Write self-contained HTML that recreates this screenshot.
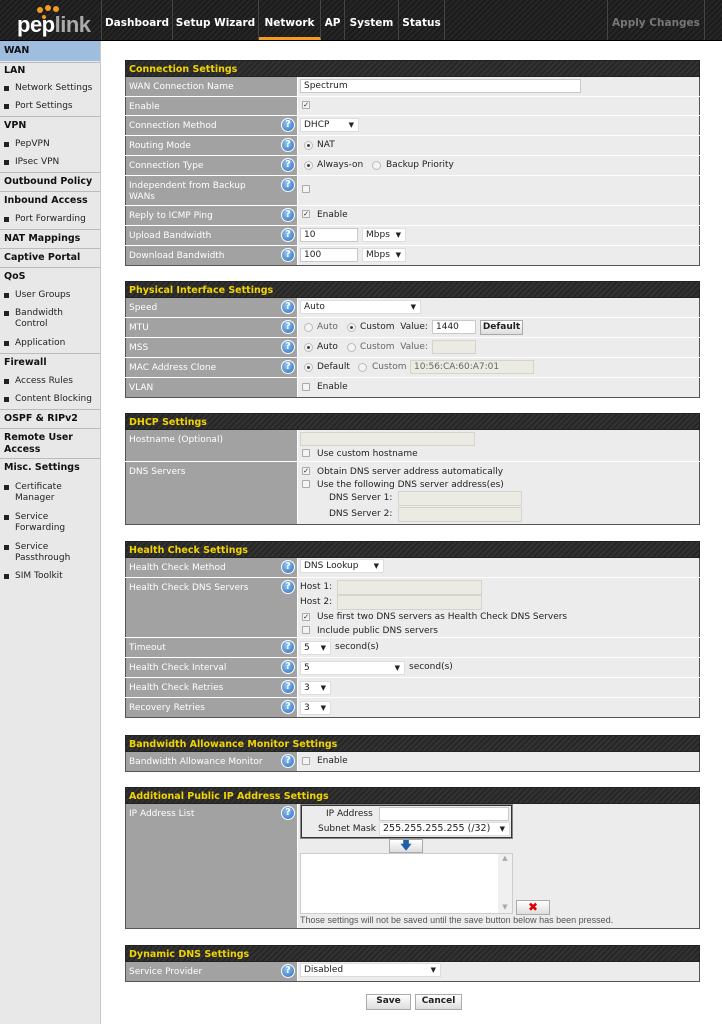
<!DOCTYPE html>
<html><head><meta charset="utf-8">
<style>
*{margin:0;padding:0;box-sizing:border-box}
body{width:722px;height:1024px;position:relative;background:#fff;font-family:"DejaVu Sans","Liberation Sans",sans-serif;font-size:9px;color:#222;overflow:hidden}
.a{position:absolute}
#top{left:0;top:0;width:722px;height:41px;background:repeating-linear-gradient(135deg,#262626 0 2px,#1b1b1b 2px 4px);border-bottom:1px solid #000}
.nav{position:absolute;top:0;height:40px;line-height:47px;color:#fff;font-weight:bold;font-size:10.5px;text-align:center;border-right:1px solid #444}
#side{left:0;top:41px;width:101px;height:983px;background:#e8e8e8;border-right:1px solid #c8c8c8}
.sh{position:absolute;left:0;width:100px;font-weight:bold;font-size:9.5px;color:#111;padding-left:4px;border-top:1px solid #bbb}
.si{position:absolute;left:4px;font-size:9px;color:#222;line-height:11px}
.si:before{content:"";position:absolute;left:0;top:3px;width:5px;height:5px;background:#222}
.si span{display:block;padding-left:11px}
.hd{position:absolute;left:125px;width:575px;height:17px;background:repeating-linear-gradient(135deg,#333 0 2px,#262626 2px 4px);color:#f2d400;font-weight:bold;font-size:9.5px;line-height:17px;padding-left:3px;border:1px solid #222}
.lb{position:absolute;left:125px;width:172px;background:#a2a2a2;color:#fff;font-size:9px;line-height:11px;padding:5px 3px 3px;border-left:1px solid #555}
.vl{position:absolute;left:298px;width:402px;background:#ececec;border-right:1px solid #555}
.bot{position:absolute;left:125px;width:575px;height:1px;background:#555}
.q{position:absolute;left:281px;width:14px;height:14px;border-radius:50%;background:radial-gradient(circle at 40% 35%,#8fc0ee,#2b71c2);border:1px solid #fff;color:#fff;font-weight:bold;font-size:10px;line-height:12px;text-align:center}
.t{position:absolute;line-height:11px;white-space:nowrap}
.in{position:absolute;height:14px;background:#fff;border:1px solid #c9c9c9;padding-left:3px;line-height:12px;font-size:9px}
.dis{background:#ebebe3;border-color:#d4d4cc}
.sel{position:absolute;height:14px;background:#fff;border:1px solid #ddd;padding-left:3px;line-height:12px;font-size:9px}
.sel:after{content:"▼";position:absolute;right:4px;top:0;font-size:7px}
.cb{position:absolute;width:8px;height:8px;border:1px solid #aaa;background:#f4f4f4;border-radius:1px;font-size:7px;line-height:6px;text-align:center;color:#222}
.rd{position:absolute;width:9px;height:9px;border:1px solid #bbb;border-radius:50%;background:#f4f4f4}
.rd.on:after{content:"";position:absolute;left:2px;top:2px;width:3px;height:3px;border-radius:50%;background:#444}
.btn{position:absolute;height:15px;background:linear-gradient(#fff,#ddd);border:1px solid #aaa;font-weight:bold;font-size:9px;line-height:13px;text-align:center}
</style></head><body>
<div id="top" class="a">
 <div class="a" style="left:17px;top:4px;width:70px;height:34px">
  <div class="a" style="left:20px;top:3px;width:6px;height:6px;border-radius:50%;background:#f39a1e"></div>
  <div class="a" style="left:28px;top:1px;width:6px;height:6px;border-radius:50%;background:#f39a1e"></div>
  <div class="a" style="left:36px;top:2px;width:6px;height:6px;border-radius:50%;background:#f39a1e"></div>
  <div class="a" style="left:25px;top:11px;width:4px;height:4px;border-radius:50%;background:#f39a1e"></div>
  <div class="t" style="left:0;top:10px;font-family:'Liberation Sans',sans-serif;font-size:22px;line-height:22px;font-weight:bold;color:#fff;letter-spacing:-0.5px">pep<span style="color:#aaa">link</span></div>
 </div>
 <div class="nav" style="left:101px;width:72px;border-left:1px solid #444">Dashboard</div>
 <div class="nav" style="left:173px;width:86px">Setup Wizard</div>
 <div class="nav" style="left:259px;width:62px;border-bottom:3px solid #f29b1d;line-height:47px">Network</div>
 <div class="nav" style="left:321px;width:24px">AP</div>
 <div class="nav" style="left:345px;width:54px">System</div>
 <div class="nav" style="left:399px;width:46px">Status</div>
 <div class="nav" style="left:607px;width:98px;color:#777;border-left:1px solid #444">Apply Changes</div>
</div>

<div id="side" class="a">
 <div class="sh" style="top:0;height:20px;line-height:19px;background:#9fbddf;border-top:none">WAN</div>
 <div class="sh" style="top:21px;line-height:16px">LAN</div>
 <div class="si" style="top:42px"><span>Network Settings</span></div>
 <div class="si" style="top:60px"><span>Port Settings</span></div>
 <div class="sh" style="top:75px;line-height:18px">VPN</div>
 <div class="si" style="top:98px"><span>PepVPN</span></div>
 <div class="si" style="top:116px"><span>IPsec VPN</span></div>
 <div class="sh" style="top:131px;line-height:18px">Outbound Policy</div>
 <div class="sh" style="top:150px;line-height:18px">Inbound Access</div>
 <div class="si" style="top:173px"><span>Port Forwarding</span></div>
 <div class="sh" style="top:188px;line-height:18px">NAT Mappings</div>
 <div class="sh" style="top:207px;line-height:18px">Captive Portal</div>
 <div class="sh" style="top:226px;line-height:18px">QoS</div>
 <div class="si" style="top:249px"><span>User Groups</span></div>
 <div class="si" style="top:267px"><span>Bandwidth<br>Control</span></div>
 <div class="si" style="top:297px"><span>Application</span></div>
 <div class="sh" style="top:312px;line-height:18px">Firewall</div>
 <div class="si" style="top:335px"><span>Access Rules</span></div>
 <div class="si" style="top:353px"><span>Content Blocking</span></div>
 <div class="sh" style="top:368px;line-height:18px">OSPF &amp; RIPv2</div>
 <div class="sh" style="top:387px;line-height:12px;padding-top:3px;height:29px">Remote User<br>Access</div>
 <div class="sh" style="top:417px;line-height:18px">Misc. Settings</div>
 <div class="si" style="top:441px"><span>Certificate<br>Manager</span></div>
 <div class="si" style="top:471px"><span>Service<br>Forwarding</span></div>
 <div class="si" style="top:501px"><span>Service<br>Passthrough</span></div>
 <div class="si" style="top:530px"><span>SIM Toolkit</span></div>
</div>

<!-- S1 -->
<div class="hd" style="top:60px">Connection Settings</div>
<div class="lb" style="top:77px;height:19px">WAN Connection Name</div><div class="vl" style="top:77px;height:19px"></div>
<div class="lb" style="top:97px;height:18px">Enable</div><div class="vl" style="top:97px;height:18px"></div>
<div class="lb" style="top:116px;height:19px">Connection Method</div><div class="vl" style="top:116px;height:19px"></div><div class="q" style="top:118px">?</div>
<div class="lb" style="top:136px;height:19px">Routing Mode</div><div class="vl" style="top:136px;height:19px"></div><div class="q" style="top:138px">?</div>
<div class="lb" style="top:156px;height:19px">Connection Type</div><div class="vl" style="top:156px;height:19px"></div><div class="q" style="top:158px">?</div>
<div class="lb" style="top:176px;height:29px">Independent from Backup<br>WANs</div><div class="vl" style="top:176px;height:29px"></div><div class="q" style="top:178px">?</div>
<div class="lb" style="top:206px;height:19px">Reply to ICMP Ping</div><div class="vl" style="top:206px;height:19px"></div><div class="q" style="top:208px">?</div>
<div class="lb" style="top:226px;height:19px">Upload Bandwidth</div><div class="vl" style="top:226px;height:19px"></div><div class="q" style="top:228px">?</div>
<div class="lb" style="top:246px;height:19px">Download Bandwidth</div><div class="vl" style="top:246px;height:19px"></div><div class="q" style="top:248px">?</div>
<div class="bot" style="top:265px"></div>
<div class="in" style="left:300px;top:79px;width:281px">Spectrum</div>
<div class="cb" style="left:302px;top:101px">✓</div>
<div class="sel" style="left:300px;top:118px;width:59px">DHCP</div>
<div class="rd on" style="left:304px;top:141px"></div><div class="t" style="left:317px;top:140px">NAT</div>
<div class="rd on" style="left:304px;top:161px"></div><div class="t" style="left:317px;top:160px">Always-on</div>
<div class="rd" style="left:372px;top:161px"></div><div class="t" style="left:386px;top:160px">Backup Priority</div>
<div class="cb" style="left:302px;top:185px"></div>
<div class="cb" style="left:302px;top:210px">✓</div><div class="t" style="left:317px;top:210px">Enable</div>
<div class="in" style="left:300px;top:228px;width:58px">10</div><div class="sel" style="left:362px;top:228px;width:44px">Mbps</div>
<div class="in" style="left:300px;top:248px;width:58px">100</div><div class="sel" style="left:362px;top:248px;width:44px">Mbps</div>

<!-- S2 -->
<div class="hd" style="top:281px">Physical Interface Settings</div>
<div class="lb" style="top:298px;height:19px">Speed</div><div class="vl" style="top:298px;height:19px"></div><div class="q" style="top:300px">?</div>
<div class="lb" style="top:318px;height:19px">MTU</div><div class="vl" style="top:318px;height:19px"></div><div class="q" style="top:320px">?</div>
<div class="lb" style="top:338px;height:19px">MSS</div><div class="vl" style="top:338px;height:19px"></div><div class="q" style="top:340px">?</div>
<div class="lb" style="top:358px;height:19px">MAC Address Clone</div><div class="vl" style="top:358px;height:19px"></div><div class="q" style="top:360px">?</div>
<div class="lb" style="top:378px;height:19px">VLAN</div><div class="vl" style="top:378px;height:19px"></div>
<div class="bot" style="top:397px"></div>
<div class="sel" style="left:300px;top:300px;width:121px">Auto</div>
<div class="rd" style="left:304px;top:323px"></div><div class="t" style="left:317px;top:322px;color:#666">Auto</div>
<div class="rd on" style="left:347px;top:323px"></div><div class="t" style="left:360px;top:322px">Custom&nbsp; Value:</div>
<div class="in" style="left:432px;top:320px;width:44px">1440</div>
<div class="btn" style="left:480px;top:320px;width:43px">Default</div>
<div class="rd on" style="left:304px;top:343px"></div><div class="t" style="left:317px;top:342px">Auto</div>
<div class="rd" style="left:347px;top:343px"></div><div class="t" style="left:360px;top:342px;color:#666">Custom&nbsp; Value:</div>
<div class="in dis" style="left:432px;top:340px;width:44px"></div>
<div class="rd on" style="left:304px;top:363px"></div><div class="t" style="left:317px;top:362px">Default</div>
<div class="rd" style="left:358px;top:363px"></div><div class="t" style="left:372px;top:362px;color:#666">Custom</div>
<div class="in dis" style="left:410px;top:360px;width:124px;color:#666">10:56:CA:60:A7:01</div>
<div class="cb" style="left:302px;top:383px"></div><div class="t" style="left:317px;top:382px">Enable</div>

<!-- S3 -->
<div class="hd" style="top:413px">DHCP Settings</div>
<div class="lb" style="top:430px;height:31px">Hostname (Optional)</div><div class="vl" style="top:430px;height:31px"></div>
<div class="lb" style="top:462px;height:62px">DNS Servers</div><div class="vl" style="top:462px;height:62px"></div>
<div class="bot" style="top:524px"></div>
<div class="in dis" style="left:300px;top:432px;width:175px"></div>
<div class="cb" style="left:302px;top:449px"></div><div class="t" style="left:317px;top:449px">Use custom hostname</div>
<div class="cb" style="left:302px;top:467px">✓</div><div class="t" style="left:317px;top:467px">Obtain DNS server address automatically</div>
<div class="cb" style="left:302px;top:480px"></div><div class="t" style="left:317px;top:480px">Use the following DNS server address(es)</div>
<div class="t" style="left:329px;top:493px">DNS Server 1:</div><div class="in dis" style="left:398px;top:491px;width:124px;height:15px"></div>
<div class="t" style="left:329px;top:509px">DNS Server 2:</div><div class="in dis" style="left:398px;top:507px;width:124px;height:15px"></div>

<!-- S4 -->
<div class="hd" style="top:541px">Health Check Settings</div>
<div class="lb" style="top:558px;height:19px">Health Check Method</div><div class="vl" style="top:558px;height:19px"></div><div class="q" style="top:560px">?</div>
<div class="lb" style="top:578px;height:59px">Health Check DNS Servers</div><div class="vl" style="top:578px;height:59px"></div><div class="q" style="top:580px">?</div>
<div class="lb" style="top:638px;height:19px">Timeout</div><div class="vl" style="top:638px;height:19px"></div><div class="q" style="top:640px">?</div>
<div class="lb" style="top:658px;height:19px">Health Check Interval</div><div class="vl" style="top:658px;height:19px"></div><div class="q" style="top:660px">?</div>
<div class="lb" style="top:678px;height:19px">Health Check Retries</div><div class="vl" style="top:678px;height:19px"></div><div class="q" style="top:680px">?</div>
<div class="lb" style="top:698px;height:19px">Recovery Retries</div><div class="vl" style="top:698px;height:19px"></div><div class="q" style="top:700px">?</div>
<div class="bot" style="top:717px"></div>
<div class="sel" style="left:300px;top:559px;width:84px">DNS Lookup</div>
<div class="t" style="left:300px;top:582px">Host 1:</div><div class="in dis" style="left:337px;top:580px;width:145px;height:15px"></div>
<div class="t" style="left:300px;top:597px">Host 2:</div><div class="in dis" style="left:337px;top:595px;width:145px;height:15px"></div>
<div class="cb" style="left:302px;top:613px">✓</div><div class="t" style="left:317px;top:612px">Use first two DNS servers as Health Check DNS Servers</div>
<div class="cb" style="left:302px;top:626px"></div><div class="t" style="left:317px;top:626px">Include public DNS servers</div>
<div class="sel" style="left:300px;top:641px;width:31px">5</div><div class="t" style="left:335px;top:642px">second(s)</div>
<div class="sel" style="left:300px;top:661px;width:105px">5</div><div class="t" style="left:409px;top:662px">second(s)</div>
<div class="sel" style="left:300px;top:681px;width:31px">3</div>
<div class="sel" style="left:300px;top:701px;width:31px">3</div>

<!-- S5 -->
<div class="hd" style="top:735px">Bandwidth Allowance Monitor Settings</div>
<div class="lb" style="top:752px;height:19px">Bandwidth Allowance Monitor</div><div class="vl" style="top:752px;height:19px"></div><div class="q" style="top:754px">?</div>
<div class="bot" style="top:771px"></div>
<div class="cb" style="left:302px;top:757px"></div><div class="t" style="left:317px;top:756px">Enable</div>

<!-- S6 -->
<div class="hd" style="top:787px">Additional Public IP Address Settings</div>
<div class="lb" style="top:804px;height:124px">IP Address List</div><div class="vl" style="top:804px;height:124px"></div><div class="q" style="top:806px">?</div>
<div class="bot" style="top:928px"></div>
<div class="a" style="left:301px;top:805px;width:211px;height:33px;border:1px solid #333;outline:1px solid #888;background:#ececec"></div>
<div class="t" style="left:326px;top:809px">IP Address</div><div class="in" style="left:379px;top:807px;width:130px;height:14px"></div>
<div class="t" style="left:318px;top:824px">Subnet Mask</div><div class="sel" style="left:379px;top:822px;width:131px;font-size:9.5px">255.255.255.255 (/32)</div>
<div class="btn" style="left:389px;top:839px;width:34px;height:14px;color:#1e5fa8;font-size:11px;line-height:11px">🡇</div>
<div class="a" style="left:300px;top:853px;width:213px;height:61px;background:#fff;border:1px solid #ccc"><div class="a" style="right:0;top:0;width:14px;height:59px;background:#f0f0f0;color:#aaa;font-size:7px;text-align:center">▲<div style="position:absolute;bottom:2px;width:14px">▼</div></div></div>
<div class="btn" style="left:516px;top:900px;width:34px;height:15px;color:#d00;font-size:12px;line-height:13px">✖</div>
<div class="t" style="left:300px;top:915px;color:#555;font-family:'Liberation Sans',sans-serif;font-size:9px">Those settings will not be saved until the save button below has been pressed.</div>

<!-- S7 -->
<div class="hd" style="top:945px">Dynamic DNS Settings</div>
<div class="lb" style="top:962px;height:19px">Service Provider</div><div class="vl" style="top:962px;height:19px"></div><div class="q" style="top:964px">?</div>
<div class="bot" style="top:981px"></div>
<div class="sel" style="left:300px;top:963px;width:141px">Disabled</div>

<div class="btn" style="left:366px;top:994px;width:45px;height:16px">Save</div>
<div class="btn" style="left:415px;top:994px;width:47px;height:16px">Cancel</div>
</body></html>
